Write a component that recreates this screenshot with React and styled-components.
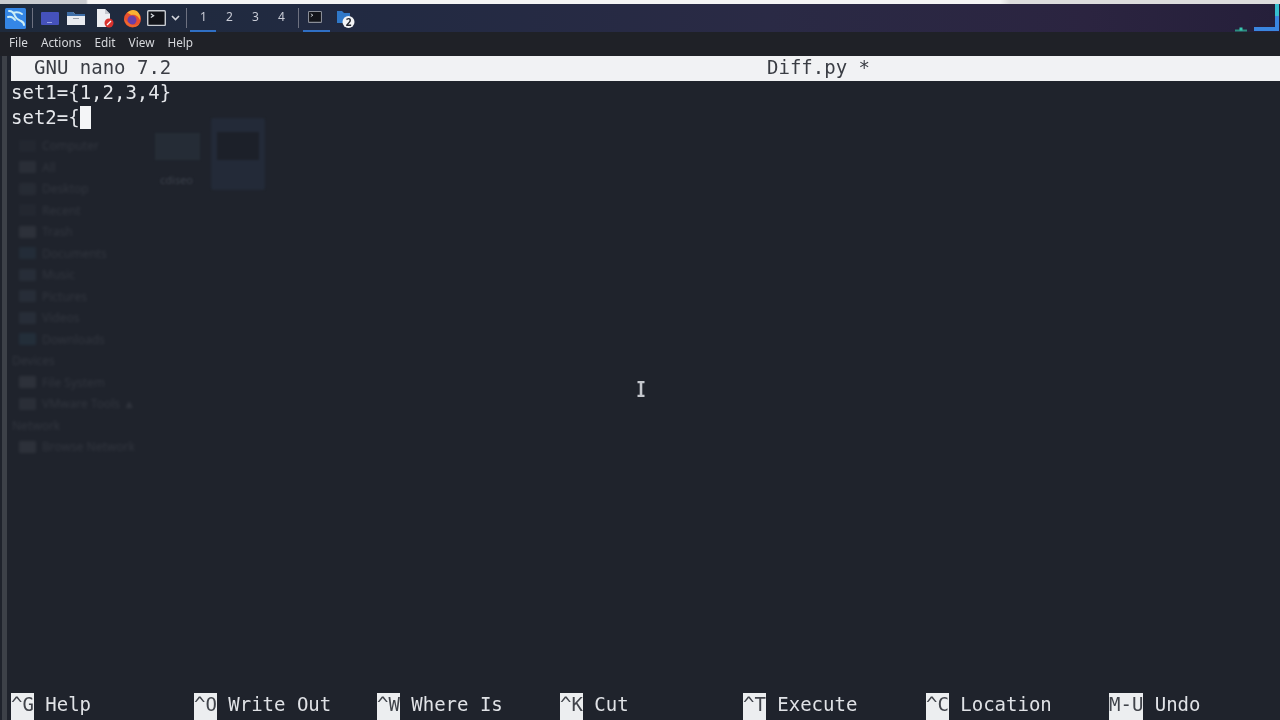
import React from 'react';
import styled, { createGlobalStyle } from 'styled-components';

const mono = '"DejaVu Sans Mono", "Liberation Mono", monospace';

const GlobalStyle = createGlobalStyle`
	html, body {
		margin: 0;
		padding: 0;
		background: #1f232c;
		overflow: hidden;
	}
`

const Screen = styled.div`
	width: 1280px;
	height: 720px;
	display: flex;
	flex-direction: column;
	overflow: hidden;
	filter: blur(0.55px);
`

const TopStrip = styled.div`
	height: 4px;
	flex: none;
	background: linear-gradient(90deg, #c9ccd0 0, #c9ccd0 86px, #f4f4f4 88px, #f4f4f4 1000px, #dcdcdc 1010px);
`

const Panel = styled.div`
	height: 28px;
	flex: none;
	display: flex;
	align-items: center;
	padding-left: 4px;
	background: linear-gradient(90deg, #1e2a3c 0, #222a42 30%, #2a2a45 60%, #2b2440 85%, #251f3a 100%);
`

const IconSlot = styled.div`
	width: ${p => p.$w}px;
	height: 28px;
	flex: none;
	display: flex;
	align-items: center;
	justify-content: center;
`

const Separator = styled.div`
	width: 1px;
	height: 20px;
	flex: none;
	margin: 0 ${p => p.$gap || 6}px;
	background: #6d7180;
`

const Workspace = styled.div`
	width: 26px;
	height: 28px;
	flex: none;
	box-sizing: border-box;
	display: flex;
	align-items: center;
	justify-content: center;
	padding: 0 0 2px 1px;
	font: 12px "Noto Sans", sans-serif;
	color: #c9ccd6;
	border-bottom: 2px solid ${p => (p.$active ? '#2f6fc4' : 'transparent')};
`

const TaskButton = styled(IconSlot)`
	box-sizing: border-box;
	padding-right: 3px;
	border-bottom: 2px solid ${p => (p.$active ? '#2f6fc4' : 'transparent')};
`

const TrayCorner = styled.div`
	margin-left: auto;
	height: 28px;
	flex: none;
	display: flex;
	align-items: flex-end;
`

const MenuBar = styled.div`
	height: 24px;
	flex: none;
	box-sizing: border-box;
	display: flex;
	align-items: center;
	gap: 13px;
	padding: 0 0 4px 9px;
	background: #1f2127;
	font: 11.8px "Noto Sans", sans-serif;
	color: #d6d8dc;
`

const Terminal = styled.div`
	position: relative;
	flex: 1;
	display: flex;
	flex-direction: column;
	min-height: 0;
	background: #1f232c;
	border-left: 2px solid #1f232c;
	padding-left: 9px;
	&::before {
		content: '';
		position: absolute;
		left: 0;
		top: 0;
		bottom: 0;
		width: 5px;
		background: #3d4148;
	}
`

const TitleBar = styled.div`
	height: 25px;
	flex: none;
	position: relative;
	display: flex;
	align-items: center;
	box-sizing: border-box;
	padding: 0 0 2px 23px;
	background: #f1f2f4;
	color: #3a3d44;
	font: 19px/23px ${mono};
	white-space: pre;
`

const FileName = styled.span`
	position: absolute;
	left: 756px;
`

const Editor = styled.div`
	flex: 1;
	margin-top: -1px;
	color: #e4e6ea;
	font: 19px/25px ${mono};
	white-space: pre;
`

const Cursor = styled.span`
	display: inline-block;
	width: 11.4px;
	height: 23px;
	vertical-align: -5px;
	background: #f4f5f7;
`

const ShortcutBar = styled.div`
	height: 27px;
	flex: none;
	display: flex;
	overflow: hidden;
`

const Shortcut = styled.div`
	width: 183px;
	flex: none;
	display: flex;
	font: 19px/22px ${mono};
	white-space: pre;
	color: #e0e2e6;
`

const Key = styled.span`
	background: #eceef0;
	color: #41444b;
	height: 27px;
	margin-right: 11.4px;
`

const GhostLayer = styled.div`
	position: absolute;
	left: 10px;
	top: 79px;
	width: 250px;
	filter: blur(1.4px);
	opacity: 0.1;
	font: 12px/21.5px "Noto Sans", sans-serif;
	color: #c8ccd4;
	pointer-events: none;
`

const GhostRow = styled.div`
	display: flex;
	align-items: center;
	gap: 6px;
	height: 21.5px;
	padding-left: ${p => (p.$heading ? 0 : 7)}px;
`

const GhostIcon = styled.span`
	width: 17px;
	height: 12px;
	flex: none;
	border-radius: 1px;
	background: ${p => p.$color || '#aab0ba'};
`

const GhostFolder = styled.div`
	position: absolute;
	left: 153px;
	top: 77px;
	width: 45px;
	height: 27px;
	background: #28313b;
	opacity: 0.7;
	filter: blur(1px);
`

const GhostFolderLabel = styled.div`
	position: absolute;
	left: 158px;
	top: 116px;
	font: 11px "Noto Sans", sans-serif;
	color: #3c414b;
	filter: blur(1.2px);
`

const GhostSelected = styled.div`
	position: absolute;
	left: 209px;
	top: 62px;
	width: 54px;
	height: 72px;
	box-sizing: border-box;
	padding: 14px 0 0;
	border-radius: 3px;
	background: #232a38;
	filter: blur(1px);
`

const GhostSelectedInner = styled.div`
	width: 42px;
	height: 28px;
	margin: 0 auto;
	background: #1c2029;
`

const Pointer = styled.svg`
	position: absolute;
	left: 634px;
	top: 325px;
`

const places = [
	['Computer', '#4a4f5a'],
	['All', '#8d929c'],
	['Desktop', '#6a6f7a'],
	['Recent', '#4a4f5a'],
	['Trash', '#a8acb4'],
	['Documents', '#4a7fa0'],
	['Music', '#6f8aa0'],
	['Pictures', '#6f8aa0'],
	['Videos', '#6f8aa0'],
	['Downloads', '#4a8fb0'],
	['Devices', null, true],
	['File System', '#a8acb4'],
	['VMware Tools  ▲', '#8d929c'],
	['Network', null, true],
	['Browse Network', '#a8acb4'],
];

const shortcuts = [
	['^G', 'Help'],
	['^O', 'Write Out'],
	['^W', 'Where Is'],
	['^K', 'Cut'],
	['^T', 'Execute'],
	['^C', 'Location'],
	['M-U', 'Undo'],
];

const KaliLogo = () => (
	<svg width="21" height="21" viewBox="0 0 21 21">
		<rect width="21" height="21" rx="1.5" fill="#3486e6" />
		<path d="M4 3c3 0 5 2 6 5 1 3 4 4 6 5 2 1 3 2 3 4M3 9c3-1 5 0 7 3M8 5c3-1 6-1 9 1" fill="none" stroke="#cdeef6" strokeWidth="2" strokeLinecap="round" />
	</svg>
);

const DesktopIcon = () => (
	<svg width="18" height="13" viewBox="0 0 18 13">
		<rect width="18" height="13" rx="1" fill="#4552bc" />
		<rect x="6" y="10" width="5" height="1" fill="#9aa4e6" />
	</svg>
);

const FolderIcon = () => (
	<svg width="20" height="16" viewBox="0 0 20 16">
		<path d="M1 2h6l2 2h10v11H1z" fill="#e8ebf0" />
		<path d="M1 2h6l2 2h10v2H1z" fill="#3f6fa8" />
		<rect x="7" y="8" width="6" height="1" fill="#9aa0aa" />
	</svg>
);

const FileIcon = () => (
	<svg width="18" height="20" viewBox="0 0 18 20">
		<path d="M1 1h8l5 5v13H1z" fill="#eceef2" />
		<path d="M9 1v5h5" fill="#c4c8d0" />
		<circle cx="13" cy="15" r="4.5" fill="#d8322e" />
		<path d="M11 17l4-4" stroke="#fff" strokeWidth="1.2" />
	</svg>
);

const FirefoxIcon = () => (
	<svg width="19" height="19" viewBox="0 0 19 19">
		<circle cx="9.5" cy="10" r="8.5" fill="#e8502e" />
		<circle cx="9" cy="11" r="4.5" fill="#6a3fa8" />
		<path d="M4 4c2 0 3 1 4 2 3-1 7 0 9 5 1-5-2-10-7-10-2 0-4 1-6 3z" fill="#f9b233" />
		<path d="M1 10c1 5 5 8 9 8 3 0 5-1 7-4-3 3-8 3-11 0-2-1-3-3-5-4z" fill="#f0682c" />
	</svg>
);

const TerminalIcon = ({ size, stroke }) => (
	<svg width={size} height={size * 0.85} viewBox="0 0 20 17">
		<rect x="0.75" y="0.75" width="18.5" height="15.5" rx="1" fill="#12141a" stroke={stroke} strokeWidth="1.5" />
		<path d="M4 4l3 2-3 2" fill="none" stroke="#d8dce2" strokeWidth="1.2" />
	</svg>
);

const Chevron = () => (
	<svg width="9" height="6" viewBox="0 0 9 6">
		<path d="M1 1l3.5 3.5L8 1" fill="none" stroke="#d4d6dc" strokeWidth="1.6" />
	</svg>
);

const FilesBadge = () => (
	<svg width="22" height="22" viewBox="0 0 22 22">
		<path d="M2 4h5l2 2h6v10H2z" fill="#2f78c8" />
		<circle cx="13.5" cy="15" r="6" fill="#f2f3f5" />
		<text x="13.5" y="18.5" textAnchor="middle" fontSize="10" fontWeight="700" fontFamily="Noto Sans, sans-serif" fill="#23262e">2</text>
	</svg>
);

const CornerMark = () => (
	<svg width="45" height="28" viewBox="0 0 45 28">
		<path d="M0 26.5h12" stroke="#2c8f80" strokeWidth="2" />
		<rect x="4.5" y="23.5" width="3" height="3" fill="#38c8b0" />
		<path d="M19 25h23V0" fill="none" stroke="#3a86e0" strokeWidth="4" />
		<path d="M42 0v12" stroke="#36c0d0" strokeWidth="4" />
	</svg>
);

const IBeam = () => (
	<Pointer width="10" height="16" viewBox="0 0 10 16">
		<path d="M1.5 1h7M1.5 15h7M5 1v14" stroke="#c4c7cd" strokeWidth="2.6" fill="none" />
	</Pointer>
);

const App = () => {
	return (
		<Screen>
			<GlobalStyle />
			<TopStrip />
			<Panel>
				<IconSlot $w={22}><KaliLogo /></IconSlot>
				<Separator $gap={6} />
				<IconSlot $w={22}><DesktopIcon /></IconSlot>
				<IconSlot $w={30}><FolderIcon /></IconSlot>
				<IconSlot $w={28}><FileIcon /></IconSlot>
				<IconSlot $w={26}><FirefoxIcon /></IconSlot>
				<IconSlot $w={22}><TerminalIcon size={19} stroke="#c8ccd2" /></IconSlot>
				<IconSlot $w={16}><Chevron /></IconSlot>
				<Separator $gap={3} />
				<Workspace $active>1</Workspace>
				<Workspace>2</Workspace>
				<Workspace>3</Workspace>
				<Workspace>4</Workspace>
				<Separator $gap={4} />
				<TaskButton $w={27} $active><TerminalIcon size={14} stroke="#8a8e98" /></TaskButton>
				<IconSlot $w={32}><FilesBadge /></IconSlot>
				<TrayCorner><CornerMark /></TrayCorner>
			</Panel>
			<MenuBar>
				<span>File</span>
				<span>Actions</span>
				<span>Edit</span>
				<span>View</span>
				<span>Help</span>
			</MenuBar>
			<Terminal>
				<GhostFolder />
				<GhostFolderLabel>cdiseo</GhostFolderLabel>
				<GhostSelected><GhostSelectedInner /></GhostSelected>
				<GhostLayer>
					{places.map(([label, color, heading]) => (
						<GhostRow key={label} $heading={heading}>
							{!heading && <GhostIcon $color={color} />}
							<span>{label}</span>
						</GhostRow>
					))}
				</GhostLayer>
				<TitleBar>
					GNU nano 7.2
					<FileName>Diff.py *</FileName>
				</TitleBar>
				<Editor>
					{'set1={1,2,3,4}\nset2={'}<Cursor />
				</Editor>
				<ShortcutBar>
					{shortcuts.map(([key, label]) => (
						<Shortcut key={key}>
							<Key>{key}</Key>
							{label}
						</Shortcut>
					))}
				</ShortcutBar>
				<IBeam />
			</Terminal>
		</Screen>
	);
}

export default App;
